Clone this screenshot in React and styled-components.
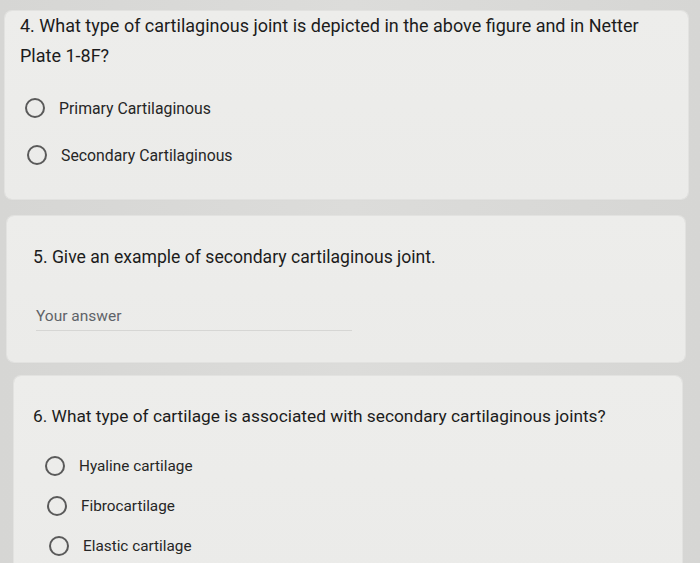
import React from "react";
import styled, { createGlobalStyle } from "styled-components";

const Global = createGlobalStyle`
  html, body { margin: 0; padding: 0; }
  body {
    background: #d8d8d6;
    font-family: Roboto, "Liberation Sans", Arial, sans-serif;
    color: #202124;
    overflow: hidden;
  }
`;

const Page = styled.div`
  width: 700px;
  height: 563px;
  box-sizing: border-box;
  padding-top: 11px;
  display: flex;
  flex-direction: column;
  background: linear-gradient(90deg, #d6d6d4 0%, #dcdcda 50%, #d6d6d4 100%);
  overflow: hidden;
`;

const Card = styled.section`
  box-sizing: border-box;
  margin: ${(p) => p.$mt || 0}px ${(p) => p.$mr}px 0 ${(p) => p.$ml}px;
  height: ${(p) => p.$h}px;
  flex-shrink: 0;
  padding: ${(p) => p.$pt}px 0 0 ${(p) => p.$pl}px;
  background: linear-gradient(180deg, #ededeb 0%, #ebebe9 100%);
  border-radius: 7px;
  box-shadow: 0 0 0 1px #e2e2e0, 0 1px 1px rgba(0, 0, 0, 0.06);
  display: flex;
  flex-direction: column;
`;

const Title = styled.div`
  font-size: ${(p) => p.$size}px;
  line-height: 30px;
  color: #1c1c1c;
  letter-spacing: 0;
  margin-bottom: ${(p) => p.$mb}px;
`;

const Options = styled.div`
  display: flex;
  flex-direction: column;
  gap: ${(p) => p.$gap}px;
`;

const Option = styled.label`
  display: flex;
  align-items: center;
  gap: 14px;
  height: 24px;
  margin-left: ${(p) => p.$indent}px;
  font-size: ${(p) => p.$size}px;
  color: #262626;
`;

const Radio = styled.span`
  box-sizing: border-box;
  width: 20px;
  height: 20px;
  border: 2px solid #5a5a5a;
  border-radius: 50%;
  flex-shrink: 0;
`;

const Answer = styled.div`
  margin-left: ${(p) => p.$indent}px;
  width: 316px;
  padding-bottom: 4px;
  border-bottom: 1px solid #d6d6d4;
  font-size: 15.5px;
  line-height: 20px;
  color: #5f6368;
`;

const q4 = ["Primary Cartilaginous", "Secondary Cartilaginous"];
const q6 = ["Hyaline cartilage", "Fibrocartilage", "Elastic cartilage"];

export default function App() {
  return (
    <>
      <Global />
      <Page>
        <Card $ml={5} $mr={12} $h={188} $pt={0} $pl={15}>
          <Title $size={18} $mb={25}>
            4. What type of cartilaginous joint is depicted in the above figure and in Netter
            <br />
            Plate 1-8F?
          </Title>
          <Options $gap={23}>
            {q4.map((t, i) => (
              <Option key={t} $size={15.8} $indent={5 + i * 2}>
                <Radio />
                {t}
              </Option>
            ))}
          </Options>
        </Card>

        <Card $mt={17} $ml={7} $mr={15} $h={146} $pt={26} $pl={26}>
          <Title $size={17.6} $mb={34}>5. Give an example of secondary cartilaginous joint.</Title>
          <Answer $indent={3}>Your answer</Answer>
        </Card>

        <Card $mt={14} $ml={14} $mr={18} $h={200} $pt={25} $pl={19}>
          <Title $size={17.3} $mb={23}>
            6. What type of cartilage is associated with secondary cartilaginous joints?
          </Title>
          <Options $gap={16}>
            {q6.map((t, i) => (
              <Option key={t} $size={15.3} $indent={12 + i * 2}>
                <Radio />
                {t}
              </Option>
            ))}
          </Options>
        </Card>
      </Page>
    </>
  );
}
